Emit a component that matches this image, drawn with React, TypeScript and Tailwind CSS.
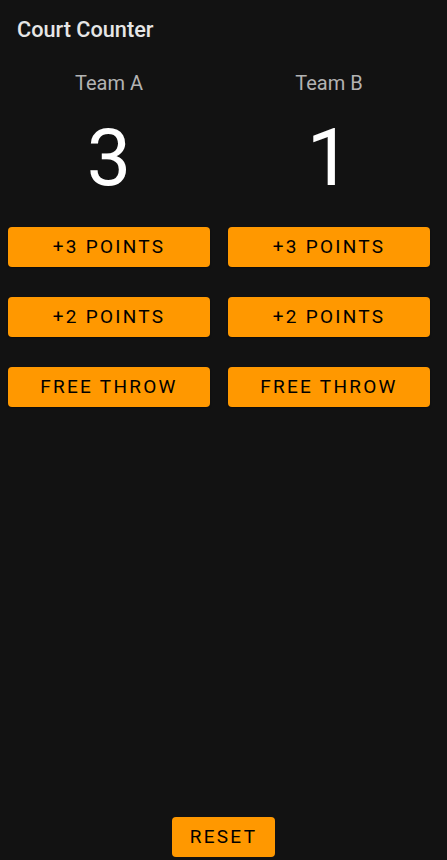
import React, { useState } from "react";

const btn =
  "h-10 w-[202px] rounded bg-[#ff9800] text-black text-[19px] font-normal tracking-[0.12em] flex items-center justify-center shadow-[0_1px_2px_rgba(0,0,0,0.4)]";

function Column({ name, score, add }: { name: string; score: number; add: (n: number) => void }) {
  return (
    <div className="w-[218px] flex flex-col items-center">
      <div className="mt-[28px] h-[24px] leading-[24px] text-[20px] text-[#b3b3b3]">{name}</div>
      <div className="mt-[27px] h-[72px] leading-[72px] text-[79px] text-white">{score}</div>
      <div className="mt-[33px] flex flex-col gap-[30px]">
        <button className={btn} onClick={() => add(3)}>+3 POINTS</button>
        <button className={btn} onClick={() => add(2)}>+2 POINTS</button>
        <button className={btn} onClick={() => add(1)}>FREE THROW</button>
      </div>
    </div>
  );
}

export default function App() {
  const [a, setA] = useState(3);
  const [b, setB] = useState(1);
  return (
    <div
      className="h-[860px] w-[447px] bg-[#121212] flex flex-col"
      style={{ fontFamily: "Roboto, 'Liberation Sans', sans-serif" }}
    >
      <div className="pl-[17px] pt-[17px] h-[26px] leading-[26px] text-[21.7px] font-medium text-[#e6e6e6] box-content">
        Court Counter
      </div>
      <div className="flex gap-[2px]">
        <Column name="Team A" score={a} add={(n) => setA(a + n)} />
        <Column name="Team B" score={b} add={(n) => setB(b + n)} />
      </div>
      <div className="flex-1" />
      <div className="flex justify-center pb-[3px]">
        <button
          className="h-10 w-[103px] rounded bg-[#ff9800] text-black text-[19px] font-normal tracking-[0.12em] flex items-center justify-center"
          onClick={() => {
            setA(0);
            setB(0);
          }}
        >
          RESET
        </button>
      </div>
    </div>
  );
}
